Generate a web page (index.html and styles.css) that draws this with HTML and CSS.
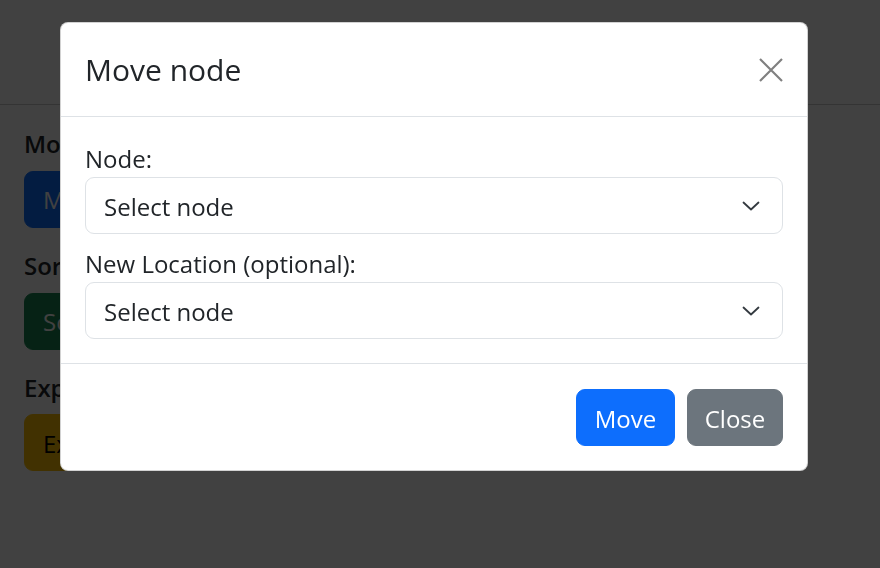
FILE: index.html
```html
<!DOCTYPE html>
<html lang="en">
<head>
<meta charset="utf-8">
<title>Move node</title>
<link rel="stylesheet" href="styles.css">
</head>
<body>
<header class="topbar"></header>
<main class="page">
  <section class="section">
    <h5 class="section-title">Move</h5>
    <button class="btn btn-primary">Move</button>
  </section>
  <section class="section">
    <h5 class="section-title">Sort</h5>
    <button class="btn btn-success">Sort</button>
  </section>
  <section class="section">
    <h5 class="section-title">Export</h5>
    <button class="btn btn-warning btn-export">Export</button>
  </section>
</main>

<div class="backdrop"></div>
<div class="modal">
  <div class="modal-dialog">
    <div class="modal-header">
      <h5 class="modal-title">Move node</h5>
      <button class="btn-close" aria-label="Close">
        <svg viewBox="0 0 24 24" width="24" height="24"><path d="M1 1 L23 23 M23 1 L1 23" stroke="#808080" stroke-width="2.2" fill="none"/></svg>
      </button>
    </div>
    <div class="modal-body">
      <div class="field">
        <label class="label">Node:</label>
        <div class="select"><span class="select-text">Select node</span>
          <svg class="chev" viewBox="0 0 18 10" width="18" height="10"><path d="M1.5 1.5 L9 8.5 L16.5 1.5" stroke="#343a40" stroke-width="1.8" stroke-linecap="round" stroke-linejoin="round" fill="none"/></svg>
        </div>
      </div>
      <div class="field last">
        <label class="label">New Location (optional):</label>
        <div class="select"><span class="select-text">Select node</span>
          <svg class="chev" viewBox="0 0 18 10" width="18" height="10"><path d="M1.5 1.5 L9 8.5 L16.5 1.5" stroke="#343a40" stroke-width="1.8" stroke-linecap="round" stroke-linejoin="round" fill="none"/></svg>
        </div>
      </div>
    </div>
    <div class="modal-footer">
      <button class="btn btn-primary btn-move">Move</button>
      <button class="btn btn-secondary btn-close-text">Close</button>
    </div>
  </div>
</div>
</body>
</html>
```

FILE: styles.css
```css
* { box-sizing: border-box; }
html, body { margin: 0; padding: 0; }
body {
  font-family: "Open Sans", "Noto Sans", sans-serif;
  font-size: 24px;
  line-height: 1.5;
  color: #212529;
  background: #fff;
  width: 880px;
  height: 568px;
  overflow: hidden;
}
.topbar {
  height: 105px;
  border-bottom: 1px solid #ccc;
}
.page {
  padding: 25px 24px 0;
}
.section { margin-bottom: 24px; }
.section-title {
  margin: 0 0 12px;
  font-size: 24px;
  font-weight: 600;
  line-height: 1.2;
}
.btn {
  display: inline-flex;
  align-items: center;
  justify-content: center;
  height: 57px;
  font-family: inherit;
  font-size: 24px;
  line-height: 1.5;
  padding: 2px 18px 0;
  border: 1px solid transparent;
  border-radius: 9px;
  color: #fff;
  cursor: pointer;
}
.btn-primary { background: #0d6efd; border-color: #0d6efd; }
.btn-success { background: #198754; border-color: #198754; }
.btn-warning { background: #ffc107; border-color: #ffc107; color: #000; }
.btn-secondary { background: #6c757d; border-color: #6c757d; }
.btn-export { width: 208px; justify-content: flex-start; }
.btn-move { width: 99px; }
.btn-close-text { width: 96px; }

.backdrop {
  position: fixed;
  inset: 0;
  background: rgba(0, 0, 0, 0.745);
}
.modal {
  position: fixed;
  inset: 0;
  padding: 22px 0 0 60px;
}
.modal-dialog {
  width: 748px;
  background: #fff;
  border: 1px solid rgba(0, 0, 0, 0.175);
  border-radius: 8px;
  display: flex;
  flex-direction: column;
}
.modal-header {
  display: flex;
  align-items: center;
  justify-content: space-between;
  height: 94px;
  padding: 0 24px;
  border-bottom: 1px solid #dee2e6;
}
.modal-title {
  margin: 0;
  font-size: 30px;
  font-weight: 500;
  line-height: 45px;
}
.btn-close {
  background: none;
  border: 0;
  padding: 0;
  width: 24px;
  height: 24px;
  display: flex;
  cursor: pointer;
}
.modal-body {
  padding: 24px;
}
.field { margin-bottom: 12px; }
.field.last { margin-bottom: 0; }
.label { display: block; line-height: 36px; }
.select {
  display: flex;
  align-items: center;
  justify-content: space-between;
  height: 57px;
  padding: 0 22px 0 18px;
  border: 1px solid #dee2e6;
  border-radius: 9px;
}
.select-text { padding-top: 3px; }
.chev { display: block; margin-top: 1px; }
.modal-footer {
  display: flex;
  justify-content: flex-end;
  gap: 12px;
  padding: 25px 24px 24px;
  border-top: 1px solid #dee2e6;
}
```
